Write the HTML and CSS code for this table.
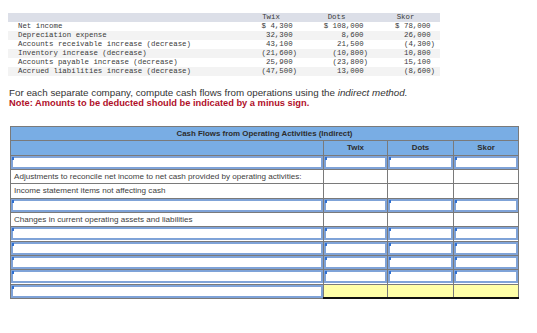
FILE: index.html
```html
<!DOCTYPE html>
<html>
<head>
<meta charset="utf-8">
<link rel="stylesheet" href="styles.css">
</head>
<body>
<div class="page">
  <table class="data">
    <colgroup><col class="c-label"><col class="c-twix"><col class="c-dots"><col class="c-skor"><col class="c-pad"></colgroup>
    <tr class="head"><td></td><td class="h">Twix</td><td class="h">Dots</td><td class="h">Skor</td><td></td></tr>
    <tr><td class="lbl">Net income</td><td class="num">$ 4,300 </td><td class="num">$ 108,000 </td><td class="num">$ 78,000 </td><td></td></tr>
    <tr class="alt"><td class="lbl">Depreciation expense</td><td class="num">32,300 </td><td class="num">8,600 </td><td class="num">26,000 </td><td></td></tr>
    <tr><td class="lbl">Accounts receivable increase (decrease)</td><td class="num">43,100 </td><td class="num">21,500 </td><td class="num">(4,300)</td><td></td></tr>
    <tr class="alt"><td class="lbl">Inventory increase (decrease)</td><td class="num">(21,600)</td><td class="num">(10,800)</td><td class="num">10,800 </td><td></td></tr>
    <tr><td class="lbl">Accounts payable increase (decrease)</td><td class="num">25,900 </td><td class="num">(23,800)</td><td class="num">15,100 </td><td></td></tr>
    <tr class="alt"><td class="lbl">Accrued liabilities increase (decrease)</td><td class="num">(47,500)</td><td class="num">13,000 </td><td class="num">(8,600)</td><td></td></tr>
  </table>

  <div class="instructions">
    <p class="task">For each separate company, compute cash flows from operations using the <em>indirect method.</em></p>
    <p class="note">Note: Amounts to be deducted should be indicated by a minus sign.</p>
  </div>

  <table class="cf">
    <colgroup><col class="w-label"><col class="w-twix"><col class="w-dots"><col class="w-skor"></colgroup>
    <tr class="title"><td colspan="4">Cash Flows from Operating Activities (Indirect)</td></tr>
    <tr class="cols"><td></td><td>Twix</td><td>Dots</td><td>Skor</td></tr>
    <tr><td class="in"><div class="box"></div></td><td class="in"><div class="box"></div></td><td class="in"><div class="box"></div></td><td class="in"><div class="box"></div></td></tr>
    <tr><td class="txt">Adjustments to reconcile net income to net cash provided by operating activities:</td><td></td><td></td><td></td></tr>
    <tr><td class="txt">Income statement items not affecting cash</td><td></td><td></td><td></td></tr>
    <tr><td class="in"><div class="box"></div></td><td class="in"><div class="box"></div></td><td class="in"><div class="box"></div></td><td class="in"><div class="box"></div></td></tr>
    <tr><td class="txt">Changes in current operating assets and liabilities</td><td></td><td></td><td></td></tr>
    <tr><td class="in"><div class="box"></div></td><td class="in"><div class="box"></div></td><td class="in"><div class="box"></div></td><td class="in"><div class="box"></div></td></tr>
    <tr><td class="in"><div class="box"></div></td><td class="in"><div class="box"></div></td><td class="in"><div class="box"></div></td><td class="in"><div class="box"></div></td></tr>
    <tr><td class="in"><div class="box"></div></td><td class="in"><div class="box"></div></td><td class="in"><div class="box"></div></td><td class="in"><div class="box"></div></td></tr>
    <tr><td class="in"><div class="box"></div></td><td class="in"><div class="box"></div></td><td class="in"><div class="box"></div></td><td class="in"><div class="box"></div></td></tr>
    <tr class="total"><td class="in"><div class="box"></div></td><td class="y"></td><td class="y"></td><td class="y"></td></tr>
  </table>
</div>
</body>
</html>
```

FILE: styles.css
```css
html, body {
  margin: 0;
  padding: 0;
  background: #ffffff;
}

.page {
  padding: 13px 0 0 8px;
}

/* ---------- data table ---------- */
.data {
  border-collapse: collapse;
  table-layout: fixed;
  width: 432px;
  font-family: "Liberation Mono", "DejaVu Sans Mono", monospace;
  font-size: 7.4px;
  color: #3a3a3a;
}

.data .c-label { width: 237px; }
.data .c-twix { width: 52px; }
.data .c-dots { width: 79px; }
.data .c-skor { width: 59px; }
.data .c-pad { width: 5px; }

.data td {
  height: 9px;
  padding: 0;
  line-height: 9px;
  white-space: pre;
}

.data .head td {
  background: #dcdfe8;
}

.data .alt td {
  background: #f3f3f3;
}

.data .h {
  text-align: center;
}

.data .lbl {
  padding-left: 10px;
}

.data .num {
  text-align: right;
}

.data td.num:nth-child(3) {
  padding-right: 8px;
}

/* ---------- instructions ---------- */
.instructions {
  margin: 12px 0 0 1px;
  font-family: "Liberation Sans", Arial, sans-serif;
  line-height: 10px;
}

.instructions p {
  margin: 0;
}

.task {
  color: #333333;
  font-size: 9.8px;
}

.task em {
  font-style: italic;
}

.note {
  color: #b0102a;
  font-weight: bold;
  font-size: 9.3px;
}

/* ---------- cash flow table ---------- */
.cf {
  margin: 18px 0 0 2px;
  border-collapse: collapse;
  table-layout: fixed;
  width: 508px;
  font-family: "Liberation Sans", Arial, sans-serif;
  font-size: 8.1px;
  color: #404040;
}

.cf .w-label { width: 313px; }
.cf .w-twix { width: 64px; }
.cf .w-dots { width: 66px; }
.cf .w-skor { width: 65px; }

.cf td {
  border: 1px solid #7a7a7a;
  height: 13px;
  padding: 0;
  box-sizing: border-box;
}

.cf tr {
  height: 14.33px;
}

.cf .title td,
.cf .cols td {
  background: #79ade4;
  font-weight: bold;
  font-size: 7.9px;
  text-align: center;
  color: #2c2c2c;
}

.cf .txt {
  padding-left: 3px;
  white-space: nowrap;
}

.cf td.in {
  padding: 0;
  position: relative;
}

.cf .box {
  position: relative;
  height: 13px;
  box-sizing: border-box;
  border: 2px solid #7fa3d8;
  background: #ffffff;
}

.cf .box::before {
  content: "";
  position: absolute;
  left: -1px;
  top: -1px;
  width: 2px;
  height: 3px;
  background: #2f6fd0;
}

.cf td.y {
  background: #ffffa8;
  border-top: 1px solid #111111;
  border-bottom: 2px solid #111111;
}
```
